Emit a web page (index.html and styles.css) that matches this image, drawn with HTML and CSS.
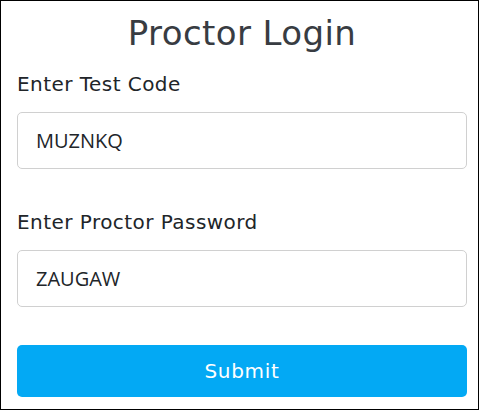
FILE: index.html
```html
<!DOCTYPE html>
<html>
<head>
<meta charset="utf-8">
<link rel="stylesheet" href="styles.css">
</head>
<body>
<div class="card">
  <h1 class="title">Proctor Login</h1>
  <label class="label">Enter Test Code</label>
  <div class="input"><span>MUZNKQ</span></div>
  <label class="label label-2">Enter Proctor Password</label>
  <div class="input"><span>ZAUGAW</span></div>
  <button class="submit">Submit</button>
</div>
</body>
</html>
```
FILE: styles.css
```css
html, body {
  margin: 0;
  padding: 0;
  background: #fff;
}
.card {
  box-sizing: border-box;
  width: 479px;
  height: 410px;
  border: 1px solid #000;
  padding: 0 11px 0 16px;
  display: flex;
  flex-direction: column;
  font-family: "DejaVu Sans", sans-serif;
  color: #212529;
}
.title {
  margin: 10px 0 0 0;
  font-size: 34px;
  line-height: 44px;
  font-weight: 400;
  letter-spacing: 0.4px;
  color: #383c42;
  text-align: center;
}
.label {
  display: block;
  font-size: 20px;
  letter-spacing: 0.45px;
  line-height: 28px;
  margin-top: 15px;
}
.label-2 {
  margin-top: 39px;
}
.input {
  box-sizing: border-box;
  height: 57px;
  margin-top: 14px;
  border: 1px solid #d0d0d0;
  border-radius: 5px;
  display: flex;
  align-items: center;
  padding-left: 18px;
  font-family: "Open Sans", sans-serif;
  font-size: 20px;
}
.submit {
  box-sizing: border-box;
  height: 52px;
  margin-top: 38px;
  border: none;
  border-radius: 5px;
  background: #03a9f4;
  color: #fff;
  font-family: "DejaVu Sans", sans-serif;
  font-size: 20px;
  letter-spacing: 0.7px;
}
```
